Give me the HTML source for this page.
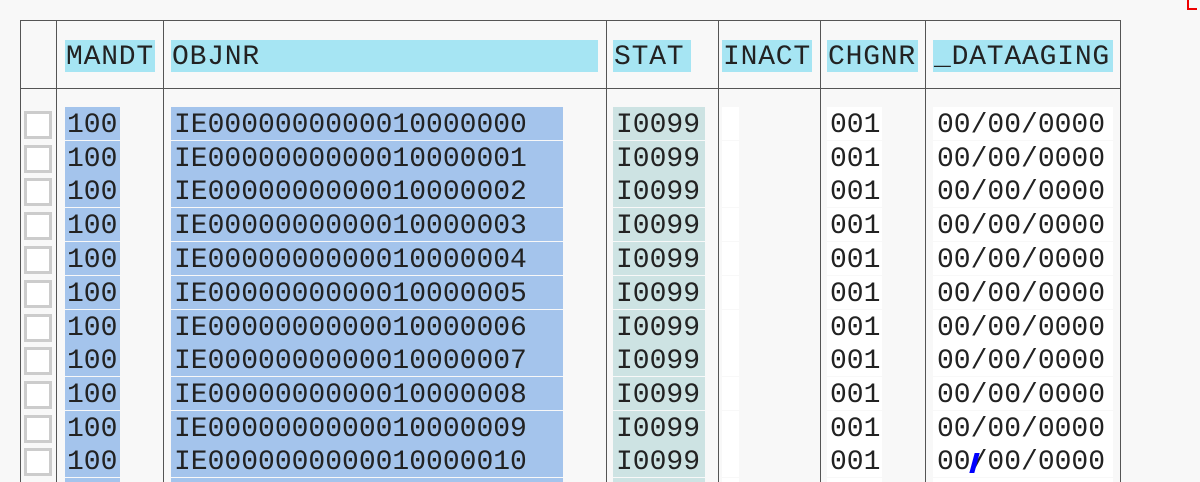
<!DOCTYPE html><html><head><style>
html,body{margin:0;width:1200px;height:482px;overflow:hidden}
body{background:#f8f8f8;position:relative;font-family:"Liberation Mono",monospace;font-size:28px;color:#222}
.a{position:absolute}
.v{position:absolute;top:20px;height:462px;width:1px;background:#555}
.h{position:absolute;left:20px;width:1100px;height:1px;background:#555}
.hd{position:absolute;top:40px;height:32px;background:#a6e5f3;line-height:35px;padding-left:1px;font-size:28px;letter-spacing:0.8px;overflow:hidden;white-space:nowrap}
.r{position:absolute;left:0;width:1200px;height:33px;overflow:hidden}
.r div{position:absolute;top:0;height:33px;line-height:37px;white-space:nowrap;overflow:hidden}
.cb{left:24px;width:22px!important;height:22px!important;top:4px!important;border:3px solid #ccc;background:#fff}
.m{left:65px;width:55px;background:#a4c4ec;padding-left:2px;box-sizing:border-box}
.o{left:171px;width:392px;background:#a4c4ec;padding-left:3px;box-sizing:border-box}
.s{left:613px;width:92px;background:#cde3e3;padding-left:3px;box-sizing:border-box}
.i{left:722px;width:17px;background:#fff}
.c{left:827px;width:55px;background:#fff;padding-left:3px;box-sizing:border-box}
.d{left:933px;width:180px;background:#fff;padding-left:4px;box-sizing:border-box}
.r.last div{height:4px}
</style></head><body>
<div class="a" style="left:1187px;top:0;width:8px;height:8px;border-left:2px solid #e00;border-bottom:2px solid #e00"></div>
<div class="h" style="top:20px"></div><div class="h" style="top:88px"></div>
<div class="v" style="left:20px"></div><div class="v" style="left:56px"></div><div class="v" style="left:163px"></div><div class="v" style="left:606px"></div><div class="v" style="left:718px"></div><div class="v" style="left:820px"></div><div class="v" style="left:925px"></div><div class="v" style="left:1120px"></div>
<div class="hd" style="left:65px;width:89px">MANDT</div>
<div class="hd" style="left:171px;width:426px">OBJNR</div>
<div class="hd" style="left:613px;width:77px">STAT</div>
<div class="hd" style="left:722px;width:89px">INACT</div>
<div class="hd" style="left:827px;width:90px">CHGNR</div>
<div class="hd" style="left:933px;width:179px">_DATAAGING</div>

<div class="r" style="top:107px"><div class="cb"></div><div class="m">100</div><div class="o">IE0000000000010000000</div><div class="s">I0099</div><div class="i"></div><div class="c">001</div><div class="d">00/00/0000</div></div>
<div class="r" style="top:141px"><div class="cb"></div><div class="m">100</div><div class="o">IE0000000000010000001</div><div class="s">I0099</div><div class="i"></div><div class="c">001</div><div class="d">00/00/0000</div></div>
<div class="r" style="top:174px"><div class="cb"></div><div class="m">100</div><div class="o">IE0000000000010000002</div><div class="s">I0099</div><div class="i"></div><div class="c">001</div><div class="d">00/00/0000</div></div>
<div class="r" style="top:208px"><div class="cb"></div><div class="m">100</div><div class="o">IE0000000000010000003</div><div class="s">I0099</div><div class="i"></div><div class="c">001</div><div class="d">00/00/0000</div></div>
<div class="r" style="top:242px"><div class="cb"></div><div class="m">100</div><div class="o">IE0000000000010000004</div><div class="s">I0099</div><div class="i"></div><div class="c">001</div><div class="d">00/00/0000</div></div>
<div class="r" style="top:276px"><div class="cb"></div><div class="m">100</div><div class="o">IE0000000000010000005</div><div class="s">I0099</div><div class="i"></div><div class="c">001</div><div class="d">00/00/0000</div></div>
<div class="r" style="top:310px"><div class="cb"></div><div class="m">100</div><div class="o">IE0000000000010000006</div><div class="s">I0099</div><div class="i"></div><div class="c">001</div><div class="d">00/00/0000</div></div>
<div class="r" style="top:343px"><div class="cb"></div><div class="m">100</div><div class="o">IE0000000000010000007</div><div class="s">I0099</div><div class="i"></div><div class="c">001</div><div class="d">00/00/0000</div></div>
<div class="r" style="top:377px"><div class="cb"></div><div class="m">100</div><div class="o">IE0000000000010000008</div><div class="s">I0099</div><div class="i"></div><div class="c">001</div><div class="d">00/00/0000</div></div>
<div class="r" style="top:411px"><div class="cb"></div><div class="m">100</div><div class="o">IE0000000000010000009</div><div class="s">I0099</div><div class="i"></div><div class="c">001</div><div class="d">00/00/0000</div></div>
<div class="r" style="top:444px"><div class="cb"></div><div class="m">100</div><div class="o">IE0000000000010000010</div><div class="s">I0099</div><div class="i"></div><div class="c">001</div><div class="d">00/00/0000</div><div class="a" style="left:972px;top:9px!important;width:5px;height:20px!important;background:#00f;transform:skewX(-15deg)"></div></div>
<div class="r last" style="top:478px;height:4px"><div class="m"></div><div class="o"></div><div class="s"></div><div class="i"></div><div class="c"></div><div class="d"></div></div>
</body></html>
